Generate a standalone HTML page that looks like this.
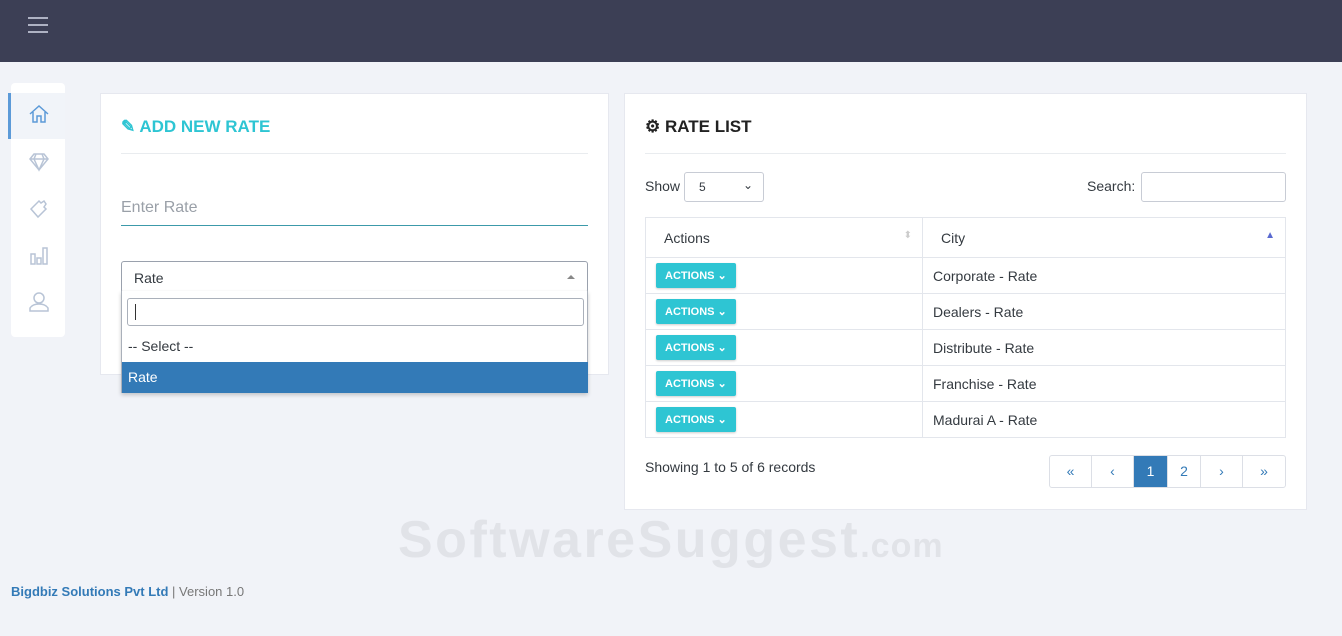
<!DOCTYPE html><html><head><style>
*{box-sizing:border-box}body{margin:0;width:1342px;height:636px;background:#f1f3f8;font-family:"Liberation Sans",sans-serif;font-size:14px;color:#343a40;position:relative;overflow:hidden}
.top{position:absolute;left:0;top:0;width:1342px;height:62px;background:#3c3f55}
.ham{position:absolute;left:28px;top:17px;width:20px}
.ham i{display:block;height:2px;background:#aeb2c3;margin-bottom:5px}
.side{position:absolute;left:11px;top:83px;width:54px;height:254px;background:#fff;border-radius:4px}
.side .act{position:absolute;left:-3px;top:10px;width:57px;height:46px;background:#f1f4f9;border-left:3px solid #5c9ad8}
.card{position:absolute;background:#fff;border:1px solid #e6e8ef}
h3{margin:0;position:absolute;font-size:17px;font-weight:bold}
.hr{position:absolute;height:1px;background:#e9ecef}
.abs{position:absolute}
table{border-collapse:collapse;position:absolute;left:20px;top:123px;width:641px}
td,th{border:1px solid #e3e6ec;height:36px;text-align:left;padding:0 10px;font-size:14px}
th{height:40px;font-weight:normal;padding-left:18px}
.btn{display:inline-block;background:#2ec5d3;color:#fff;font-size:11px;font-weight:bold;padding:6px 9px;border-radius:2px;box-shadow:0 1px 2px rgba(0,0,0,.2)}
.pg{position:absolute;top:455px;left:1049px;display:flex;border:1px solid #dcdfe6;border-radius:3px;height:33px}
.pg span{width:42px;text-align:center;line-height:31px;border-right:1px solid #dcdfe6;color:#337ab7}
</style></head><body>
<div class="top"><div class="ham"><i></i><i></i><i></i></div></div>
<div class="side"><div class="act"></div>
<svg class="abs" style="left:17px;top:20px" width="22" height="22" viewBox="0 0 22 22" fill="none" stroke="#5c9ad8" stroke-width="1.5"><path d="M2 11L11 3l9 8M5 9v10h4v-6h4v6h4V9"/></svg>
<svg class="abs" style="left:17px;top:68px" width="22" height="22" viewBox="0 0 22 22" fill="none" stroke="#b8c4d6" stroke-width="1.5"><path d="M2 8l4-5h10l4 5-9 11zM2 8h18M8 3l-2 5 5 11 5-11-2-5"/></svg>
<svg class="abs" style="left:17px;top:114px" width="22" height="22" viewBox="0 0 22 22" fill="none" stroke="#b8c4d6" stroke-width="1.5"><path d="M3 12l8-8 2 2 3-2 2 3-2 3 2 2-8 8z"/></svg>
<svg class="abs" style="left:17px;top:162px" width="22" height="22" viewBox="0 0 22 22" fill="none" stroke="#b8c4d6" stroke-width="1.5"><path d="M3 9h4v10H3zM9 13h4v6H9zM15 3h4v16h-4z"/></svg>
<svg class="abs" style="left:17px;top:208px" width="22" height="22" viewBox="0 0 22 22" fill="none" stroke="#b8c4d6" stroke-width="1.5"><circle cx="11" cy="7" r="5"/><path d="M2 20v-3c2-3 5-4 9-4s7 1 9 4v3z"/></svg>
</div>
<div class="card" style="left:100px;top:93px;width:509px;height:282px">
<h3 style="left:20px;top:23px;color:#2ec5d3">✎ ADD NEW RATE</h3>
<div class="hr" style="left:20px;top:59px;width:467px"></div>
<div class="abs" style="left:20px;top:105px;color:#9aa0a8;font-size:16px">Enter Rate</div>
<div class="hr" style="left:20px;top:131px;width:467px;background:#3c9aaa"></div>
<div class="abs" style="left:20px;top:167px;width:467px;height:32px;border:1px solid #9aa1ad;border-radius:3px;padding:8px 12px">Rate<span style="position:absolute;right:12px;top:13px;border:4px solid transparent;border-bottom-color:#888;border-top:0"></span></div>
</div>
<div class="abs" style="left:121px;top:291px;width:467px;height:102px;background:#fff;border:1px solid #aab0ba;border-top:0;box-shadow:0 2px 4px rgba(0,0,0,.2)">
<div class="abs" style="left:5px;top:7px;width:457px;height:28px;border:1px solid #aab0ba;border-radius:3px"><span style="position:absolute;left:7px;top:5px;width:1px;height:16px;background:#333"></span></div>
<div class="abs" style="left:6px;top:47px">-- Select --</div>
<div class="abs" style="left:0;top:71px;width:466px;height:31px;background:#337ab7;color:#fff;padding:7px 6px">Rate</div>
</div>
<div class="card" style="left:624px;top:93px;width:683px;height:417px">
<h3 style="left:20px;top:23px;color:#222">⚙ RATE LIST</h3>
<div class="hr" style="left:20px;top:59px;width:641px"></div>
<div class="abs" style="left:20px;top:84px">Show</div>
<div class="abs" style="left:59px;top:78px;width:80px;height:30px;border:1px solid #c8ccd5;border-radius:3px;padding:7px 14px;font-size:12px">5<span style="position:absolute;right:10px;top:5px;font-size:12px">⌄</span></div>
<div class="abs" style="left:462px;top:84px">Search:</div>
<div class="abs" style="left:516px;top:78px;width:145px;height:30px;border:1px solid #c8ccd5;border-radius:3px"></div>
<table><tr><th style="width:277px">Actions<span style="float:right;color:#ccc;font-size:10px">⬍</span></th><th>City<span style="float:right;color:#5a6ad0;font-size:10px">▲</span></th></tr>
<tr><td><span class="btn">ACTIONS ⌄</span></td><td>Corporate - Rate</td></tr>
<tr><td><span class="btn">ACTIONS ⌄</span></td><td>Dealers - Rate</td></tr>
<tr><td><span class="btn">ACTIONS ⌄</span></td><td>Distribute - Rate</td></tr>
<tr><td><span class="btn">ACTIONS ⌄</span></td><td>Franchise - Rate</td></tr>
<tr><td><span class="btn">ACTIONS ⌄</span></td><td>Madurai A - Rate</td></tr></table>
<div class="abs" style="left:20px;top:365px">Showing 1 to 5 of 6 records</div>
</div>
<div class="pg"><span>«</span><span>‹</span><span style="background:#337ab7;color:#fff;width:34px">1</span><span style="width:33px">2</span><span>›</span><span style="border:0">»</span></div>
<div class="abs" style="left:398px;top:510px;font-size:52px;letter-spacing:2.5px;font-weight:bold;color:#e1e3e8;white-space:nowrap">SoftwareSuggest<span style="font-size:34px;letter-spacing:1px">.com</span></div>
<div class="abs" style="left:11px;top:584px;font-size:13px;color:#777"><b style="color:#337ab7">Bigdbiz Solutions Pvt Ltd</b> | Version 1.0</div>
</body></html>
